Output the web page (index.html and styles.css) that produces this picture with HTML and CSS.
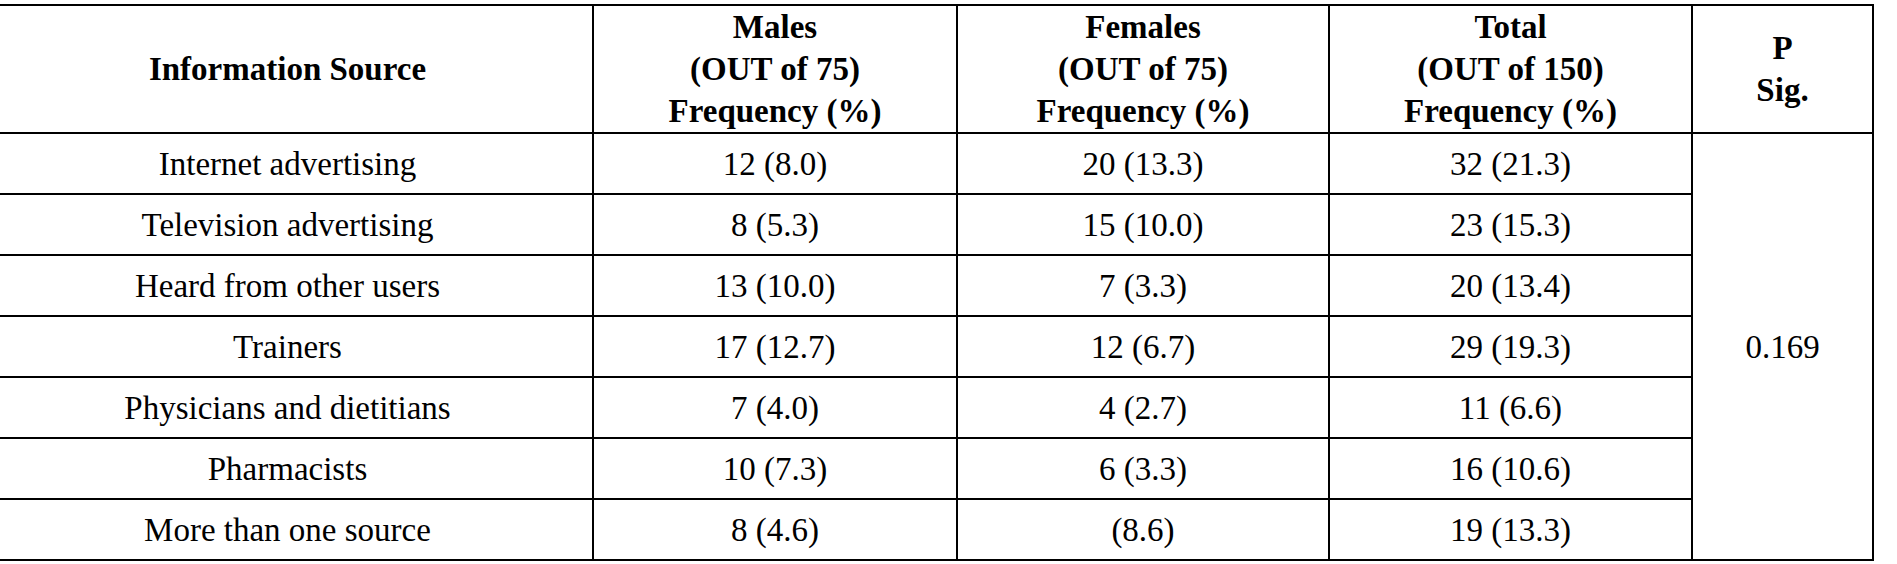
FILE: index.html
```html
<!DOCTYPE html>
<html>
<head>
<meta charset="utf-8">
<link rel="stylesheet" href="styles.css">
</head>
<body>
<table class="data">
  <colgroup>
    <col class="c-src">
    <col class="c-m">
    <col class="c-f">
    <col class="c-t">
    <col class="c-p">
  </colgroup>
  <thead>
    <tr>
      <th class="first">Information Source</th>
      <th>Males<br>(OUT of 75)<br>Frequency (%)</th>
      <th>Females<br>(OUT of 75)<br>Frequency (%)</th>
      <th>Total<br>(OUT of 150)<br>Frequency (%)</th>
      <th class="pcol">P<br>Sig.</th>
    </tr>
  </thead>
  <tbody>
    <tr><td class="first">Internet advertising</td><td>12 (8.0)</td><td>20 (13.3)</td><td>32 (21.3)</td><td class="pcol" rowspan="7">0.169</td></tr>
    <tr><td class="first">Television advertising</td><td>8 (5.3)</td><td>15 (10.0)</td><td>23 (15.3)</td></tr>
    <tr><td class="first">Heard from other users</td><td>13 (10.0)</td><td>7 (3.3)</td><td>20 (13.4)</td></tr>
    <tr><td class="first">Trainers</td><td>17 (12.7)</td><td>12 (6.7)</td><td>29 (19.3)</td></tr>
    <tr><td class="first">Physicians and dietitians</td><td>7 (4.0)</td><td>4 (2.7)</td><td>11 (6.6)</td></tr>
    <tr><td class="first">Pharmacists</td><td>10 (7.3)</td><td>6 (3.3)</td><td>16 (10.6)</td></tr>
    <tr><td class="first">More than one source</td><td>8 (4.6)</td><td>(8.6)</td><td>19 (13.3)</td></tr>
  </tbody>
</table>
</body>
</html>
```

FILE: styles.css
```css
html, body {
  margin: 0;
  padding: 0;
  background: #ffffff;
  overflow: hidden;
}

body {
  padding-top: 4px;
  font-family: "Liberation Serif", "Times New Roman", serif;
  color: #000000;
}

.data {
  border-collapse: collapse;
  table-layout: fixed;
  width: 1890px;
  margin-left: -17px;
}

.c-src { width: 610px; }
.c-m { width: 364px; }
.c-f { width: 372px; }
.c-t { width: 363px; }
.c-p { width: 181px; }

.data th,
.data td {
  border: 2px solid #000000;
  text-align: center;
  vertical-align: middle;
  padding: 0;
}

.data th.first,
.data td.first {
  border-left: none;
}

.data th {
  height: 126px;
  font-size: 33px;
  font-weight: bold;
  line-height: 42px;
}

.data td {
  height: 59px;
  font-size: 33px;
  line-height: 36px;
}
```
